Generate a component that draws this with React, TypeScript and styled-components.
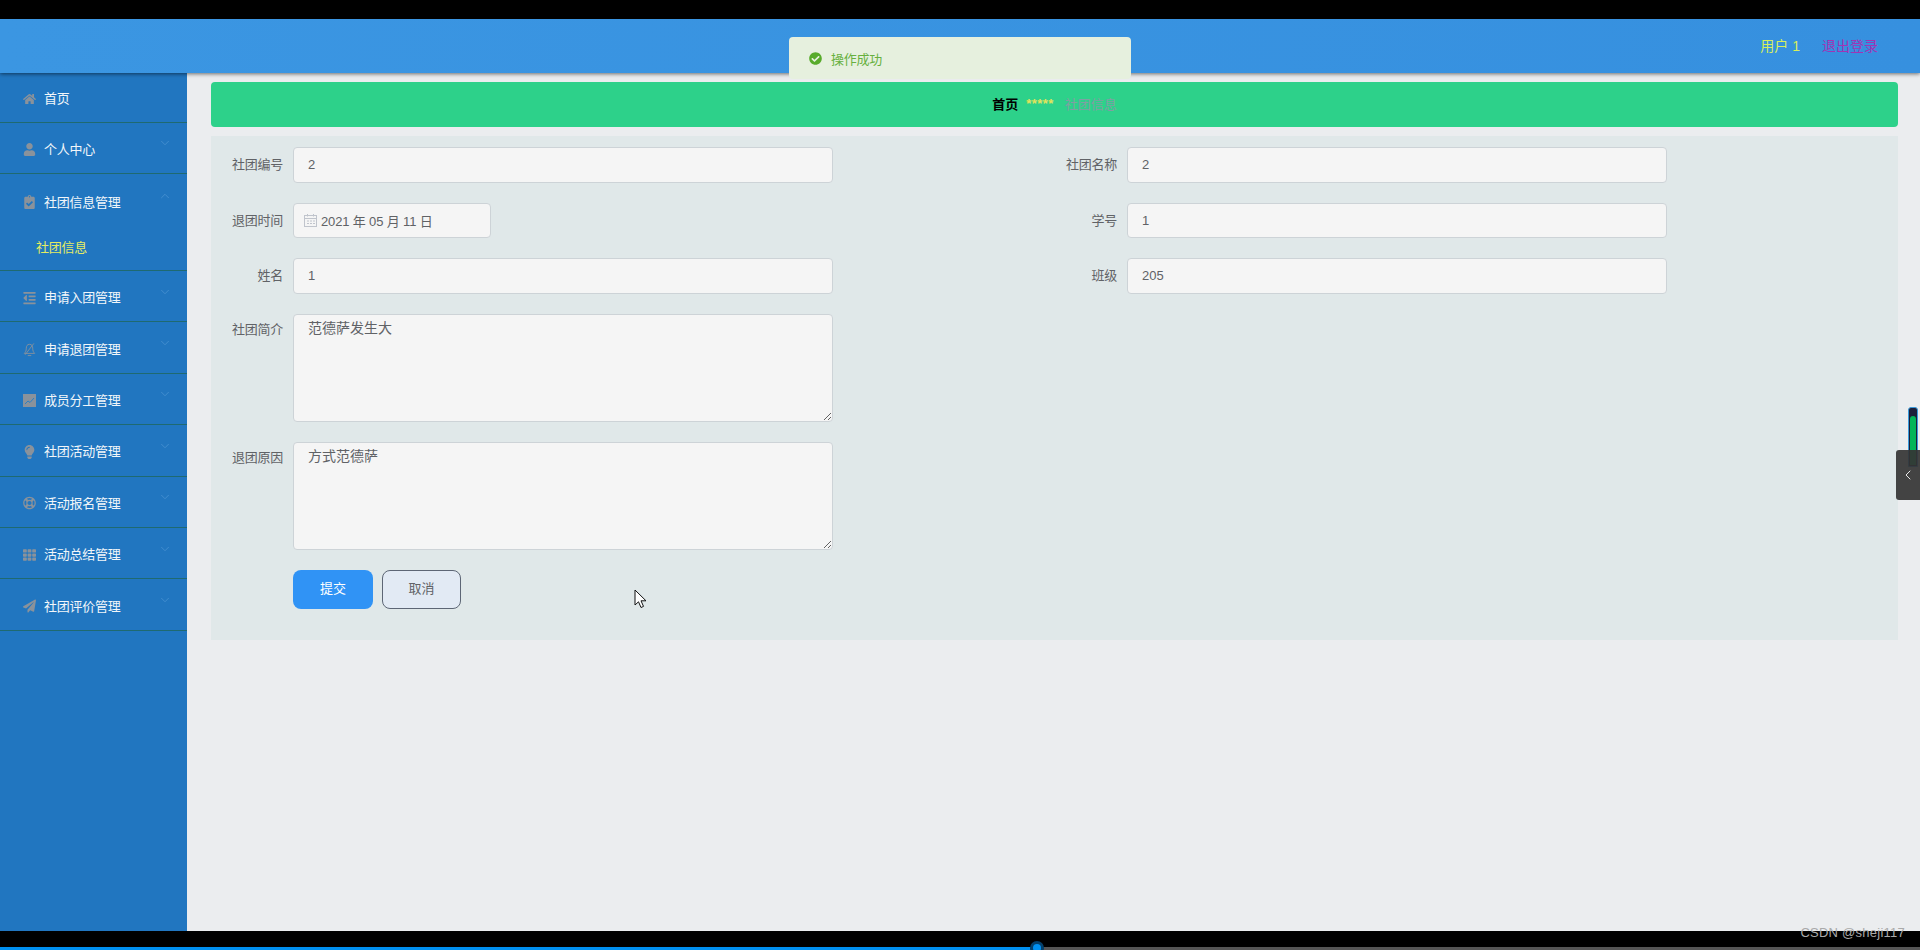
import styled, { createGlobalStyle } from "styled-components";
import { ReactNode } from "react";
import { ChevronDown, ChevronLeft, ChevronUp } from "lucide-react";
import {
    FaHome,
    FaUser,
    FaClipboardCheck,
    FaOutdent,
    FaLightbulb,
    FaRegLifeRing,
    FaTh,
    FaPaperPlane,
    FaCheckCircle,
} from "react-icons/fa";

const GlobalStyle = createGlobalStyle`
    * {
        box-sizing: border-box;
    }

    html, body {
        margin: 0;
        padding: 0;
        height: 100%;
        overflow: hidden;
        background: #000;
        font-family: "Liberation Sans", "Noto Sans CJK SC", sans-serif;
    }
`

const Page = styled.div`
    position: relative;
    width: 1920px;
    height: 950px;
    display: flex;
    flex-direction: column;
    overflow: hidden;
    background: #000;
`

const Letterbox = styled.div`
    height: 19px;
    flex: none;
    background: #000;
`

const Header = styled.header`
    height: 54px;
    flex: none;
    display: flex;
    justify-content: flex-end;
    align-items: center;
    gap: 22px;
    padding: 0 42px 0 0;
    position: relative;
    z-index: 3;
    font-size: 14px;
    background: linear-gradient(90deg, #3b96e2, #3690df);
    box-shadow: 0 1px 4px rgba(0, 0, 0, .55);
`

const HeaderLink = styled.span<{ $color: string }>`
    color: ${props => props.$color};
    margin-top: -3px;
`

const Body = styled.div`
    flex: 1;
    min-height: 0;
    display: flex;
`

const Sidebar = styled.nav`
    width: 187px;
    flex: none;
    background: #2176c0;
`

const MenuGroup = styled.div`
    border-bottom: 1px solid #1f6a70;
`

const MenuRow = styled.div<{ $height: number }>`
    height: ${props => props.$height}px;
    display: flex;
    align-items: center;
    padding: 1px 15px 0 23px;
    font-size: 13px;
    letter-spacing: -.25px;
    color: #f2f6fa;
`

const MenuIcon = styled.span`
    width: 13px;
    height: 15px;
    flex: none;
    display: flex;
    align-items: center;
    justify-content: center;
    margin: 2px 8px 0 0;
    color: #8a929b;
    font-size: 14px;
`

const MenuCaret = styled.span`
    margin-left: auto;
    margin-top: -10px;
    display: flex;
    color: #4f97d4;
`

const SubItem = styled.div`
    height: 42px;
    padding: 0 0 4px 36px;
    display: flex;
    align-items: center;
    font-size: 13px;
    letter-spacing: -.25px;
    color: #e4ec62;
`

const Main = styled.main`
    flex: 1;
    min-width: 0;
    padding: 9px 22px 0 24px;
    display: flex;
    flex-direction: column;
    gap: 9px;
    background: #ebedef;
`

const Breadcrumb = styled.div`
    height: 45px;
    flex: none;
    display: flex;
    justify-content: center;
    align-items: center;
    gap: 8px;
    padding-bottom: 2px;
    font-size: 13px;
    border-radius: 4px;
    background: #2dd18a;
`

const CrumbHome = styled.span`
    font-weight: 700;
    color: #000;
`

const CrumbStars = styled.span`
    color: #e3e35a;
    font-size: 13px;
    font-weight: 700;
    letter-spacing: .4px;
    margin: -1px 3px 0 0;
`

const CrumbCurrent = styled.span`
    color: #7f9fa3;
`

const FormPanel = styled.form`
    height: 504px;
    flex: none;
    padding-top: 11px;
    display: grid;
    grid-template-columns: 834px 834px;
    grid-auto-rows: min-content;
    row-gap: 20px;
    background: #e0e8e9;
`

const Field = styled.div<{ $wide?: boolean }>`
    display: flex;
    align-items: flex-start;
    gap: 10px;
    grid-column: ${props => props.$wide ? "1 / span 2" : "auto"};
`

const Label = styled.label<{ $tight?: boolean }>`
    width: 72px;
    flex: none;
    height: ${props => props.$tight ? 32 : 35.6}px;
    line-height: ${props => props.$tight ? 32 : 35.6}px;
    text-align: right;
    font-size: 13px;
    letter-spacing: -.25px;
    color: #606266;
`

const TextInput = styled.input`
    width: 540px;
    height: 35.6px;
    padding: 0 14px;
    outline: none;
    font: 13px "Liberation Sans", "Noto Sans CJK SC", sans-serif;
    color: #606266;
    border: 1px solid #cdd3d7;
    border-radius: 4px;
    background: #f5f5f5;
`

const DateBox = styled.div`
    width: 198px;
    height: 35.6px;
    display: flex;
    align-items: center;
    gap: 4px;
    padding-left: 10px;
    font-size: 13px;
    letter-spacing: -.15px;
    color: #606266;
    border: 1px solid #cdd3d7;
    border-radius: 4px;
    background: #f5f5f5;
`

const TextArea = styled.textarea`
    width: 540px;
    height: 108px;
    display: block;
    padding: 3px 14px;
    outline: none;
    font: 14px/21px "Liberation Sans", "Noto Sans CJK SC", sans-serif;
    color: #606266;
    border: 1px solid #cdd3d7;
    border-radius: 4px;
    background: #f5f5f5;
`

const Actions = styled.div`
    grid-column: 1 / span 2;
    display: flex;
    gap: 9px;
    padding-left: 82px;
`

const SubmitButton = styled.button`
    width: 80px;
    height: 39px;
    padding: 0 0 3px;
    font: 13px "Liberation Sans", "Noto Sans CJK SC", sans-serif;
    color: #fff;
    border: none;
    border-radius: 8px;
    background: #3093f5;
`

const CancelButton = styled.button`
    width: 79px;
    height: 39px;
    padding: 0 0 3px;
    font: 13px "Liberation Sans", "Noto Sans CJK SC", sans-serif;
    color: #606266;
    border: 1px solid #5d6675;
    border-radius: 8px;
    background: #e2eaf4;
`

const Toast = styled.div`
    position: absolute;
    z-index: 5;
    top: 37px;
    left: 789px;
    width: 342px;
    height: 42px;
    display: flex;
    align-items: center;
    gap: 9px;
    padding-left: 20px;
    font-size: 13px;
    letter-spacing: -.25px;
    color: #67b03e;
    border-radius: 4px;
    background: #e6f0de;
`

const Watermark = styled.span`
    position: absolute;
    z-index: 6;
    right: 15px;
    top: 925px;
    font-size: 13px;
    letter-spacing: .25px;
    line-height: 16px;
    color: #a9a9a9;
`

const Progress = styled.div`
    position: absolute;
    z-index: 6;
    left: 0;
    right: 0;
    bottom: 0;
    height: 3px;
    background: #555;
`

const ProgressDone = styled.div`
    width: 1037px;
    height: 100%;
    background: #0090f0;
`

const ProgressKnob = styled.span`
    position: absolute;
    left: 1030px;
    top: -6px;
    width: 14px;
    height: 14px;
    border-radius: 50%;
    background: #0090f0;
    border: 3px solid #04406c;
`

const ScrollThumb = styled.div`
    position: absolute;
    z-index: 6;
    left: 1908px;
    top: 407px;
    width: 10px;
    height: 60px;
    padding: 1px;
    display: flex;
    flex-direction: column;
    background: #1c1f3a;
    border: 1px solid #3a9bdc;
    border-radius: 3px 3px 0 0;
`

const ScrollFill = styled.div`
    margin-top: 7px;
    flex: 1;
    background: #02b558;
    border-radius: 3px 3px 0 0;
`

const DockTab = styled.div`
    position: absolute;
    z-index: 7;
    left: 1896px;
    top: 450px;
    width: 24px;
    height: 50px;
    display: flex;
    align-items: center;
    justify-content: center;
    color: #e8e8e8;
    border-radius: 3px 0 0 3px;
    background: rgba(52, 52, 52, .92);
`

const Pointer = styled.svg`
    position: absolute;
    z-index: 7;
    left: 634px;
    top: 589px;
`

const ChartIcon = () => (
    <svg width="13" height="13" viewBox="0 0 13 13">
        <rect width="13" height="13" fill="#8a929b" />
        <path d="M2 10 L5 7 L7 8.5 L11 4" fill="none" stroke="#2f7fc2" strokeWidth="1" />
    </svg>
)

const BellSlashIcon = () => (
    <svg width="15" height="15" viewBox="0 0 15 15" fill="none" stroke="#8a929b" strokeWidth="1">
        <path d="M7.5 1.5 C4.8 1.5 3.8 3.6 3.8 6 C3.8 9 3 10.5 1.5 12 H13.5 C12 10.5 11.2 9 11.2 6 C11.2 3.6 10.2 1.5 7.5 1.5 Z" />
        <path d="M12.5 0.5 L2.5 13.5 M5.5 14.5 H9.5" />
    </svg>
)

const CalendarIcon = () => (
    <svg width="13" height="13" viewBox="0 0 13 13" fill="none" stroke="#c0c4cc" strokeWidth="1">
        <rect x=".5" y="1.5" width="12" height="11" />
        <path d="M.5 4.5 H12.5 M3.5 0 V2.5 M9.5 0 V2.5 M3 7 H5 M6 7 H8 M9 7 H11 M3 9.5 H5 M6 9.5 H8 M9 9.5 H11" />
    </svg>
)

type MenuEntry = {
    label: string
    icon: ReactNode
    caret?: boolean
    open?: boolean
    child?: string
    height: number
}

const menu: MenuEntry[] = [
    { label: "首页", icon: <FaHome />, height: 48.6 },
    { label: "个人中心", icon: <FaUser size={13} />, caret: true, height: 50.6 },
    { label: "社团信息管理", icon: <FaClipboardCheck />, caret: true, open: true, child: "社团信息", height: 53.6 },
    { label: "申请入团管理", icon: <FaOutdent />, caret: true, height: 50.6 },
    { label: "申请退团管理", icon: <BellSlashIcon />, caret: true, height: 50.4 },
    { label: "成员分工管理", icon: <ChartIcon />, caret: true, height: 50.4 },
    { label: "社团活动管理", icon: <FaLightbulb />, caret: true, height: 50.4 },
    { label: "活动报名管理", icon: <FaRegLifeRing />, caret: true, height: 50.4 },
    { label: "活动总结管理", icon: <FaTh />, caret: true, height: 50.4 },
    { label: "社团评价管理", icon: <FaPaperPlane />, caret: true, height: 50.4 },
]

export default function App() {
    return (
        <Page>
            <GlobalStyle />
            <Letterbox />
            <Header>
                <HeaderLink $color="#d9ee5c">用户 1</HeaderLink>
                <HeaderLink $color="#a233b4">退出登录</HeaderLink>
            </Header>
            <Body>
                <Sidebar>
                    {menu.map(item => (
                        <MenuGroup key={item.label}>
                            <MenuRow $height={item.height}>
                                <MenuIcon>{item.icon}</MenuIcon>
                                {item.label}
                                {item.caret && (
                                    <MenuCaret>
                                        {item.open
                                            ? <ChevronUp size={14} strokeWidth={1.2} />
                                            : <ChevronDown size={14} strokeWidth={1.2} />}
                                    </MenuCaret>
                                )}
                            </MenuRow>
                            {item.child && <SubItem>{item.child}</SubItem>}
                        </MenuGroup>
                    ))}
                </Sidebar>
                <Main>
                    <Breadcrumb>
                        <CrumbHome>首页</CrumbHome>
                        <CrumbStars>*****</CrumbStars>
                        <CrumbCurrent>社团信息</CrumbCurrent>
                    </Breadcrumb>
                    <FormPanel>
                        <Field>
                            <Label>社团编号</Label>
                            <TextInput readOnly value="2" />
                        </Field>
                        <Field>
                            <Label>社团名称</Label>
                            <TextInput readOnly value="2" />
                        </Field>
                        <Field>
                            <Label>退团时间</Label>
                            <DateBox>
                                <CalendarIcon />
                                2021 年 05 月 11 日
                            </DateBox>
                        </Field>
                        <Field>
                            <Label>学号</Label>
                            <TextInput readOnly value="1" />
                        </Field>
                        <Field>
                            <Label>姓名</Label>
                            <TextInput readOnly value="1" />
                        </Field>
                        <Field>
                            <Label>班级</Label>
                            <TextInput readOnly value="205" />
                        </Field>
                        <Field $wide>
                            <Label $tight>社团简介</Label>
                            <TextArea readOnly value="范德萨发生大" />
                        </Field>
                        <Field $wide>
                            <Label $tight>退团原因</Label>
                            <TextArea readOnly value="方式范德萨" />
                        </Field>
                        <Actions>
                            <SubmitButton type="button">提交</SubmitButton>
                            <CancelButton type="button">取消</CancelButton>
                        </Actions>
                    </FormPanel>
                </Main>
            </Body>
            <Letterbox />

            <Toast>
                <FaCheckCircle size={13} color="#58ab2b" />
                操作成功
            </Toast>
            <ScrollThumb>
                <ScrollFill />
            </ScrollThumb>
            <DockTab>
                <ChevronLeft size={16} strokeWidth={1.5} />
            </DockTab>
            <Pointer width="13" height="20" viewBox="0 0 13 20">
                <path d="M1 1 L1 16 L4.5 12.8 L7 18.5 L9.5 17.4 L7 11.8 L12 11.8 Z" fill="#fff" stroke="#111" strokeWidth="1" />
            </Pointer>
            <Watermark>CSDN @sheji117</Watermark>
            <Progress>
                <ProgressDone />
                <ProgressKnob />
            </Progress>
        </Page>
    )
}
